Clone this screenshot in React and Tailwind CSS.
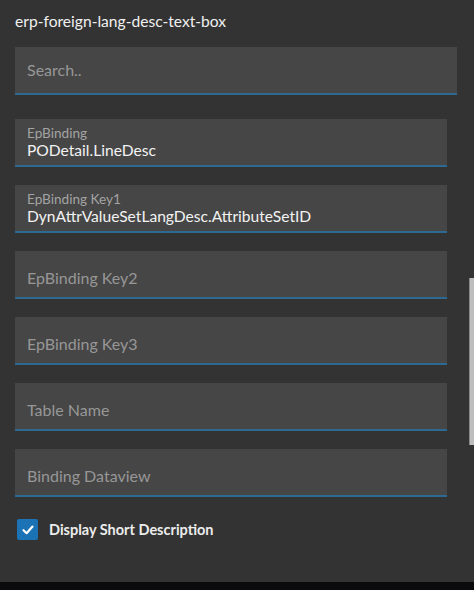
import React from "react";

function Field({ label, value, placeholder, wide, search }) {
  return (
    <div
      className={`${wide ? "mr-[17px]" : "mr-[27px]"} ${placeholder && !search ? "pt-[7px]" : ""} h-[48px] bg-[#464646] border-b-2 border-[#2c6a93] px-3 flex flex-col justify-center`}
    >
      {placeholder ? (
        <span className="text-[16px] text-[#979797] leading-none">{placeholder}</span>
      ) : (
        <>
          <span className="text-[13.6px] text-[#a3a3a3] leading-[15px]">{label}</span>
          <span className="text-[15.6px] text-[#f2f2f2] leading-[18px]">{value}</span>
        </>
      )}
    </div>
  );
}

export default function App() {
  return (
    <div
      className="w-[474px] h-[590px] bg-[#333333] flex flex-col overflow-hidden relative"
      style={{ fontFamily: "Lato, 'Open Sans', sans-serif" }}
    >
      <div className="flex-1 flex flex-col pl-[15px]">
        <div className="h-[47px] flex items-center text-[15.6px] text-[#f0f0f0] pb-[3px]">
          erp-foreign-lang-desc-text-box
        </div>
        <Field placeholder="Search.." wide search />
        <div className="flex flex-col gap-[18px] mt-[24px]">
          <Field label="EpBinding" value="PODetail.LineDesc" />
          <Field label="EpBinding Key1" value="DynAttrValueSetLangDesc.AttributeSetID" />
          <Field placeholder="EpBinding Key2" />
          <Field placeholder="EpBinding Key3" />
          <Field placeholder="Table Name" />
          <Field placeholder="Binding Dataview" />
        </div>
        <div className="flex items-center gap-[11px] mt-[22px] pl-[2px]">
          <div className="w-[21px] h-[21px] rounded-[2px] bg-[#1b72b5] flex items-center justify-center">
            <svg width="14" height="14" viewBox="0 0 14 14">
              <path d="M2.5 7.2 L5.6 10.2 L11.5 3.6" fill="none" stroke="white" strokeWidth="2.2" strokeLinecap="round" strokeLinejoin="round" />
            </svg>
          </div>
          <span className="text-[14.5px] font-bold text-[#ececec]">Display Short Description</span>
        </div>
      </div>
      <div className="h-[8px] bg-[#0b0b0d]" />
      <div className="absolute right-0 top-[278px] w-[5px] h-[167px] bg-[#bdbdbd] border-l border-[#8a8a8a]" />
    </div>
  );
}
